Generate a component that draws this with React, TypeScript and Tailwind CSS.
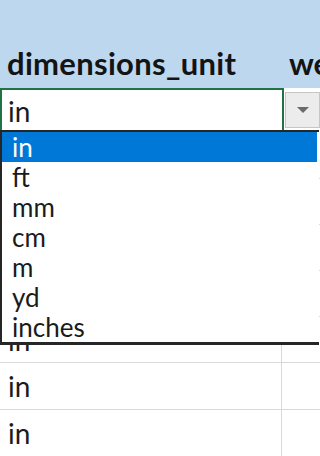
import { useState } from 'react';

const units = ['in', 'ft', 'mm', 'cm', 'm', 'yd', 'inches'];

// rows under the active cell; the first four sit fully behind the open list
const rows = [
  { h: 'h-[46px]', text: '' },
  { h: 'h-[46px]', text: '' },
  { h: 'h-[46px]', text: '' },
  { h: 'h-[46px]', text: '' },
  { h: 'h-[46px]', text: 'in' },
  { h: 'h-[47px]', text: 'in' },
  { h: 'h-[47px]', text: 'in' },
];

export default function App() {
  const [selected] = useState('in');

  return (
    <div className="relative w-[320px] h-[456px] overflow-hidden bg-white font-['Lato','Liberation_Sans',sans-serif] text-[#1b1b1b]">
      {/* header row */}
      <div className="flex h-[88px] bg-[#bdd7ee]">
        <div className="flex w-[283px] shrink-0 items-end pb-[9px] pl-[7px]">
          <span className="text-[31px] font-bold leading-none tracking-[0.3px] text-[#141414]">dimensions_unit</span>
        </div>
        <div className="flex min-w-0 items-end overflow-hidden pb-[9px] pl-[6px]">
          <span className="text-[31px] font-bold leading-none text-[#141414]">we</span>
        </div>
      </div>

      {/* active cell + dropdown button */}
      <div className="flex h-[45px]">
        <div className="flex w-[284px] shrink-0 items-center border-2 border-[#217346] pl-[6px]">
          <span className="text-[28px] leading-none">{selected}</span>
        </div>
        <div className="flex flex-col pt-[4px] pl-[1px]">
          <div className="flex h-[36px] w-[35px] items-center justify-center border border-[#c6c6c6] bg-[#ececec]">
            <svg width="14" height="8" viewBox="0 0 14 8">
              <path d="M1 1 L13 1 L7 7 Z" fill="#6a6a6a" />
            </svg>
          </div>
        </div>
      </div>

      {/* plain rows */}
      {rows.map((r, i) => (
        <div key={i} className={`flex ${r.h} border-b border-[#d9d9d9]`}>
          <div className="flex w-[282px] shrink-0 items-center border-r border-[#d9d9d9] pl-[8px]">
            <span className="text-[28px] leading-none">{r.text}</span>
          </div>
          <div className="flex-1" />
        </div>
      ))}

      {/* open list */}
      <div className="absolute left-0 top-[130px] w-[319px] border-t-2 border-l-2 border-b-[3px] border-[#262626] bg-white">
        <ul className="pr-[2px]">
          {units.map((u) => (
            <li
              key={u}
              className={`flex h-[30px] items-center pl-[10px] text-[26px] leading-none ${
                u === selected ? 'bg-[#0078d7] text-white' : ''
              }`}
            >
              {u}
            </li>
          ))}
        </ul>
      </div>
    </div>
  );
}
